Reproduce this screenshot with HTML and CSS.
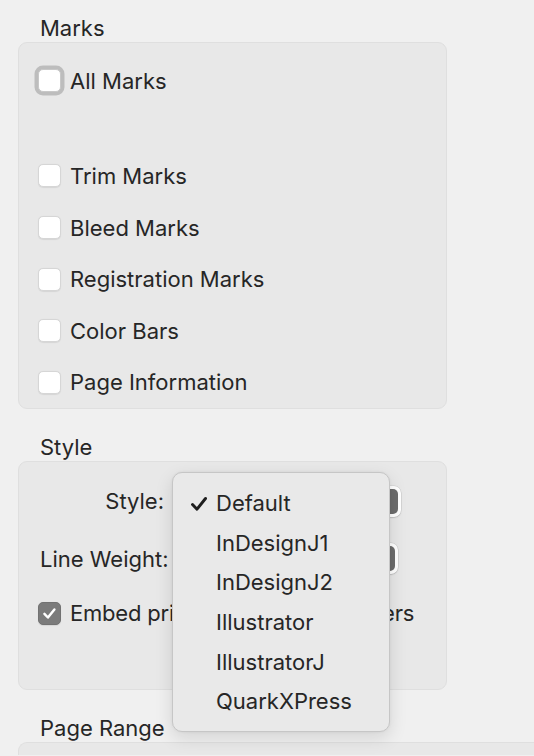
FILE: index.html
```html
<!DOCTYPE html>
<html>
<head>
<meta charset="utf-8">
<link rel="stylesheet" href="styles.css">
</head>
<body>
<div class="pane">
  <div class="title first">Marks</div>
  <div class="group marks-group">
    <div class="row"><span class="cb focus"></span><span class="lbl">All Marks</span></div>
    <div class="spacer"></div>
    <div class="row"><span class="cb"></span><span class="lbl">Trim Marks</span></div>
    <div class="row"><span class="cb"></span><span class="lbl">Bleed Marks</span></div>
    <div class="row"><span class="cb"></span><span class="lbl">Registration Marks</span></div>
    <div class="row"><span class="cb"></span><span class="lbl">Color Bars</span></div>
    <div class="row"><span class="cb"></span><span class="lbl">Page Information</span></div>
  </div>

  <div class="title">Style</div>
  <div class="group style-group">
    <div class="frow frow-1">
      <span class="flabel">Style:</span>
      <span class="popup"><span class="ptext">Default</span><span class="parrow"></span></span>
    </div>
    <div class="frow frow-2">
      <span class="flabel">Line Weight:</span>
      <span class="popup"><span class="ptext">0.125 pt</span><span class="parrow"></span></span>
    </div>
    <div class="row embed"><span class="cb checked"><svg viewBox="0 0 24 24" width="23" height="23"><path d="M6.2 12.4 L10.2 16.6 L17.6 7.4" fill="none" stroke="#fff" stroke-width="2.8" stroke-linecap="round" stroke-linejoin="round"/></svg></span><span class="lbl tight">Embed printer's marks in headers</span></div>
  </div>

  <div class="title">Page Range</div>
  <div class="group wide"></div>
</div>

<div class="menu">
  <div class="mitem"><span class="check"><svg viewBox="0 0 20 20" width="20" height="20"><path d="M3.5 10.5 L8 15.2 L16.5 4.5" fill="none" stroke="#1e1e1e" stroke-width="2.9" stroke-linecap="round" stroke-linejoin="round"/></svg></span>Default</div>
  <div class="mitem">InDesignJ1</div>
  <div class="mitem">InDesignJ2</div>
  <div class="mitem">Illustrator</div>
  <div class="mitem">IllustratorJ</div>
  <div class="mitem">QuarkXPress</div>
</div>
</body>
</html>
```

FILE: styles.css
```css
html, body {
  margin: 0;
  padding: 0;
}
body {
  background: #f0f0f0;
  font-family: Inter, "Noto Sans", "Liberation Sans", sans-serif;
  font-size: 22px;
  color: #262626;
  width: 534px;
  height: 756px;
  overflow: hidden;
  position: relative;
}
.pane {
  display: flex;
  flex-direction: column;
  padding-left: 18px;
}
.title {
  height: 28px;
  line-height: 28px;
  padding-left: 22px;
  margin-top: 24px;
}
.title.first {
  margin-top: 14px;
}
.group {
  width: 429px;
  background: #e8e8e8;
  border: 1px solid #dfdfdf;
  border-radius: 9px;
  box-sizing: border-box;
  display: flex;
  flex-direction: column;
  padding: 12px 0 0 19px;
}
.marks-group {
  height: 367px;
}
.row {
  height: 52px;
  display: flex;
  align-items: center;
}
.spacer {
  height: 44px;
}
.cb {
  width: 23px;
  height: 23px;
  box-sizing: border-box;
  border-radius: 5px;
  background: #ffffff;
  border: 1px solid #d6d6d6;
  box-shadow: 0 0.5px 1px rgba(0,0,0,0.08);
  margin-right: 9px;
  flex: none;
  display: flex;
  align-items: center;
  justify-content: center;
}
.cb.focus {
  box-shadow: 0 0 0 3.5px #bdbdbd;
  border-color: #c8c8c8;
}
.cb.checked {
  background: #7b7b7b;
  border-color: #727272;
}
.lbl {
  white-space: nowrap;
}
.lbl.tight {
  letter-spacing: -0.2px;
}
.style-group {
  height: 229px;
  padding-top: 10px;
}
.frow {
  display: flex;
  align-items: center;
  height: 57px;
}
.frow-1 {
  height: 58px;
}
.flabel {
  margin-left: 2px;
  white-space: nowrap;
}
.frow-1 .flabel {
  width: 124px;
  text-align: right;
}
.popup {
  margin-left: 10px;
  width: 227px;
  height: 31px;
  box-sizing: border-box;
  background: #ffffff;
  border-radius: 7px;
  box-shadow: 0 0 0 0.5px rgba(0,0,0,0.12), 0 1px 1.5px rgba(0,0,0,0.12);
  display: flex;
  align-items: center;
  justify-content: space-between;
  padding: 3px 3px 3px 10px;
}
.frow-2 .popup {
  width: 223px;
  margin-left: 6px;
}
.ptext {
  font-size: 20px;
}
.parrow {
  width: 20px;
  height: 25px;
  border-radius: 5px;
  background: #6c6c6c;
}
.wide {
  width: 540px;
  height: 13px;
  border-right: none;
  border-bottom: none;
  border-radius: 9px 0 0 0;
}
.menu {
  position: absolute;
  left: 172px;
  top: 472px;
  width: 218px;
  height: 260px;
  box-sizing: border-box;
  padding: 10px 0;
  background: #e9e9e9;
  border: 1px solid #c6c6c6;
  border-radius: 10px;
  box-shadow: 0 6px 18px rgba(0,0,0,0.12), 0 0 3px rgba(0,0,0,0.06);
  display: flex;
  flex-direction: column;
}
.mitem {
  height: 40px;
  display: flex;
  align-items: center;
  padding-left: 43px;
  position: relative;
  white-space: nowrap;
}
.check {
  position: absolute;
  left: 16px;
  top: 10px;
  width: 20px;
  height: 20px;
}
```
